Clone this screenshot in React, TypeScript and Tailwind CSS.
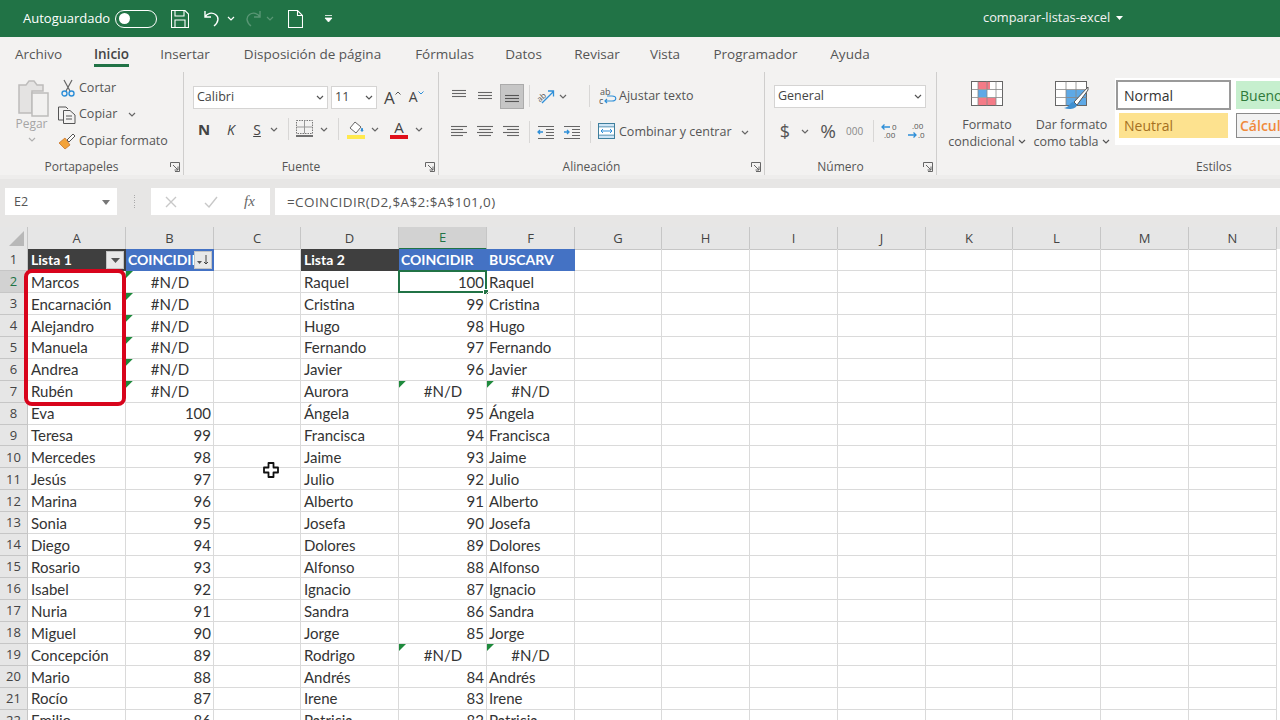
import { ReactNode } from "react";

const names1 = ["Marcos","Encarnación","Alejandro","Manuela","Andrea","Rubén","Eva","Teresa","Mercedes","Jesús","Marina","Sonia","Diego","Rosario","Isabel","Nuria","Miguel","Concepción","Mario","Rocío","Emilio"];
const match1 = ["#N/D","#N/D","#N/D","#N/D","#N/D","#N/D","100","99","98","97","96","95","94","93","92","91","90","89","88","87","86"];
const names2 = ["Raquel","Cristina","Hugo","Fernando","Javier","Aurora","Ángela","Francisca","Jaime","Julio","Alberto","Josefa","Dolores","Alfonso","Ignacio","Sandra","Jorge","Rodrigo","Andrés","Irene","Patricia"];
const match2 = ["100","99","98","97","96","#N/D","95","94","93","92","91","90","89","88","87","86","85","#N/D","84","83","82"];
const columns = ["A","B","C","D","E","F","G","H","I","J","K","L","M","N"];
const gridCols = "grid grid-cols-[28px_98px_88px_87px_98px_88px_88px_87px_88px_88px_88px_87px_88px_88px_88px_3px]";

function Chevron({ className = "" }: { className?: string }) {
  return (
    <svg width="8" height="5" viewBox="0 0 8 5" className={className}>
      <path d="M1 1l3 3 3-3" fill="none" stroke="currentColor" strokeWidth="1.2" />
    </svg>
  );
}

function AlignIcon({ lines, active }: { lines: [number, number][]; active?: boolean }) {
  return (
    <svg width="18" height="16" viewBox="0 0 18 16" className={active ? "text-[#555]" : "text-[#666]"}>
      {lines.map(([x, y], i) => (
        <path key={i} d={`M${x} ${y + 0.5}H${18 - x - (i % 2 && x === 1 ? 4 : 0)}`} stroke="currentColor" strokeWidth="1.1" />
      ))}
    </svg>
  );
}

function Group({ label, width, launcher, children }: { label: string; width: string; launcher?: boolean; children: ReactNode }) {
  return (
    <div className={`${width} shrink-0 flex flex-col h-full pt-[3px] border-r border-[#cfcecd]`}>
      <div className="h-[84px] shrink-0">{children}</div>
      <div className="flex items-center h-[16px] text-[12px] text-[#555]">
        <span className="flex-1 text-center">{label}</span>
        <span className="w-[20px] flex justify-end pr-[3px]">
          {launcher && (
            <svg width="10" height="10" viewBox="0 0 10 10" className="text-[#666]">
              <path d="M.5 5V.5H9.5V9.5H5M3 3l5 5M8 4.5V8H4.5" fill="none" stroke="currentColor" strokeWidth="1" />
            </svg>
          )}
        </span>
      </div>
    </div>
  );
}

function Sep({ className = "" }: { className?: string }) {
  return <span className={`w-px h-[22px] bg-[#d8d7d6] ${className}`} />;
}

function Combo({ text, width, className = "" }: { text: string; width: string; className?: string }) {
  return (
    <div className={`${width} h-[23px] bg-white border border-[#d5d4d3] flex items-center justify-between pl-[3px] pr-[3px] text-[12.5px] text-[#444] ${className}`}>
      {text}
      <Chevron className="text-[#555]" />
    </div>
  );
}

function TitleBar() {
  return (
    <div className="h-[37px] bg-[#217346] flex items-center text-white shrink-0 text-[13px]">
      <span className="ml-[23px] w-[84px]">Autoguardado</span>
      <span className="ml-[8px] w-[42px] h-[18px] rounded-full border border-white flex items-center pl-[3px]">
        <span className="w-[11px] h-[11px] rounded-full bg-white" />
      </span>
      <svg width="18" height="18" viewBox="0 0 18 18" className="ml-[14px]">
        <path d="M.5.5H14L17.5 4V17.5H.5ZM4 .5V6H13V.5M4 17.5V10H14V17.5" fill="none" stroke="#fff" strokeWidth="1.1" />
      </svg>
      <svg width="18" height="18" viewBox="0 0 18 18" className="ml-[14px]">
        <path d="M2 1V7H8M2 7C4 3 9 2 12.5 4.5S16 12 11 16" fill="none" stroke="#fff" strokeWidth="1.4" />
      </svg>
      <Chevron className="ml-[6px] text-white" />
      <svg width="18" height="18" viewBox="0 0 18 18" className="ml-[9px] opacity-25">
        <path d="M16 1V7H10M16 7C14 3 9 2 5.500 4.500S2 12 7 16" fill="none" stroke="#fff" strokeWidth="1.4" />
      </svg>
      <Chevron className="ml-[4px] text-white opacity-25" />
      <svg width="15" height="18" viewBox="0 0 15 18" className="ml-[14px]">
        <path d="M.5.5H9.500L14.500 5.500V17.500H.5ZM9.500.5V5.500H14.500" fill="none" stroke="#fff" strokeWidth="1.1" />
      </svg>
      <svg width="9" height="8" viewBox="0 0 9 8" className="ml-[21px]">
        <path d="M1 .5H8M1 3L4.500 7 8 3Z" fill="#fff" stroke="#fff" strokeWidth=".8" />
      </svg>
      <span className="ml-[650px] mb-[2px] w-[142px] flex items-center whitespace-nowrap text-[#f2f2f2] text-[12.8px]">
        comparar-listas-excel
        <svg width="7" height="4" viewBox="0 0 7 4" className="ml-[6px]"><path d="M0 0H7L3.500 4Z" fill="#fff" /></svg>
      </span>
    </div>
  );
}

const tabs: [string, string][] = [
  ["Archivo", "w-[47px]"],
  ["Inicio", "w-[35px]"],
  ["Insertar", "w-[48px]"],
  ["Disposición de página", "w-[143px]"],
  ["Fórmulas", "w-[57px]"],
  ["Datos", "w-[37px]"],
  ["Revisar", "w-[46px]"],
  ["Vista", "w-[32px] -ml-[3px]"],
  ["Programador", "w-[85px]"],
  ["Ayuda", "w-[40px]"],
];

function Tabs() {
  return (
    <div className="h-[35px] shrink-0 flex gap-[32px] pl-[15px] text-[13.500px] text-[#555]">
      {tabs.map(([t, w]) => (
        <div key={t} className={`${w} h-[30px] pt-[7px] flex justify-center whitespace-nowrap ${t === "Inicio" ? "border-b-[3px] border-[#217346] font-semibold text-[#444]" : ""}`}>
          {t}
        </div>
      ))}
    </div>
  );
}

function Clipboard() {
  return (
    <Group label="Portapapeles" width="w-[184px]" launcher>
      <div className="flex h-full text-[12.500px] text-[#555]">
        <div className="w-[58px] pl-[5px] pt-[4px] flex flex-col items-center text-[#a5a5a5]">
          <svg width="32" height="38" viewBox="0 0 32 38" className="ml-[3px]">
            <path d="M2 6H9L12 2H17L20 6H26V12H15V34H2Z" fill="#e4e3e2" stroke="#bdbcbb" strokeWidth="1.500" />
            <rect x="15" y="14" width="16" height="23" fill="#f2f1f0" stroke="#bdbcbb" strokeWidth="1.500" />
          </svg>
          <span className="-mt-[2px] text-[12px]">Pegar</span>
          <Chevron className="mt-[4px] text-[#b0b0b0]" />
        </div>
        <div className="flex flex-col">
          <div className="h-[26.500px] flex items-center">
            <svg width="14" height="18" viewBox="0 0 14 18" className="ml-[3px] mr-[4px]">
              <path d="M3 1L9 12M11 1L5 12" stroke="#666" strokeWidth="1.200" />
              <circle cx="3.500" cy="14.500" r="2.500" fill="none" stroke="#2e8fd8" strokeWidth="1.400" />
              <circle cx="10.500" cy="14.500" r="2.500" fill="none" stroke="#2e8fd8" strokeWidth="1.400" />
            </svg>
            Cortar
          </div>
          <div className="h-[26.500px] flex items-center">
            <svg width="18" height="18" viewBox="0 0 18 18" className="mr-[3px]">
              <path d="M5 14H.5V1H8L10 3" fill="none" stroke="#555" strokeWidth="1" />
              <path d="M5.500 4.500H12L17 9V17.500H5.500ZM8 10H14M8 13H14" fill="none" stroke="#555" strokeWidth="1" />
            </svg>
            Copiar
            <Chevron className="ml-[11px] text-[#666]" />
          </div>
          <div className="h-[26.500px] flex items-center">
            <svg width="18" height="18" viewBox="0 0 18 18" className="mr-[3px]">
              <path d="M1 11L7 6L12 13L7 17C5 15 3 13 1 11Z" fill="#f2a33a" stroke="#c9752a" strokeWidth=".8" />
              <path d="M9 8L15 2L17 4L11 10Z" fill="#fff" stroke="#555" strokeWidth="1" />
            </svg>
            Copiar formato
          </div>
        </div>
      </div>
    </Group>
  );
}

function Font() {
  return (
    <Group label="Fuente" width="w-[255px]" launcher>
      <div className="flex flex-col h-full pl-[9px] pt-[10px] text-[#444]">
        <div className="flex items-center h-[24px]">
          <Combo text="Calibri" width="w-[135px]" />
          <Combo text="11" width="w-[46px]" className="ml-[3px]" />
          <span className="ml-[7px] text-[17px] leading-none">A</span>
          <svg width="6" height="4" viewBox="0 0 6 4" className="mb-[8px]"><path d="M.5 3.500L3 1 5.500 3.500" fill="none" stroke="#555" /></svg>
          <span className="ml-[8px] text-[14px] leading-none">A</span>
          <svg width="6" height="4" viewBox="0 0 6 4" className="mb-[8px]"><path d="M.5.500L3 3 5.500.500" fill="none" stroke="#2e8fd8" /></svg>
        </div>
        <div className="flex items-center h-[24px] mt-[8px]">
          <span className="ml-[4px] w-[14px] text-center font-bold text-[15px]">N</span>
          <span className="ml-[13px] w-[14px] text-center italic text-[14px]">K</span>
          <span className="ml-[12px] w-[14px] text-center underline text-[14px]">S</span>
          <Chevron className="ml-[6px] text-[#666]" />
          <Sep className="ml-[10px]" />
          <svg width="18" height="18" viewBox="0 0 18 18" className="ml-[7px]">
            <path d="M.5.500H16.500V13.500H.5Z" fill="none" stroke="#777" strokeDasharray="1.500 1" />
            <path d="M8.500.500V13.500M.5 7H16.500" stroke="#999" />
            <path d="M0 16H17" stroke="#444" strokeWidth="1.500" />
          </svg>
          <Chevron className="ml-[6px] text-[#666]" />
          <Sep className="ml-[10px]" />
          <svg width="18" height="20" viewBox="0 0 18 20" className="ml-[8px]">
            <path d="M3 9L8 3L14 8L9 14Z" fill="#fff" stroke="#666" />
            <path d="M15 9l1 3-2 0Z" fill="#2e8fd8" stroke="#2e8fd8" />
            <rect y="16" width="18" height="4" fill="#ffe94d" />
          </svg>
          <Chevron className="ml-[6px] text-[#666]" />
          <span className="ml-[11px] w-[18px] flex flex-col items-center">
            <span className="text-[15px] leading-[16px]">A</span>
            <span className="w-[18px] h-[4px] bg-[#e00f1a]" />
          </span>
          <Chevron className="ml-[7px] text-[#666]" />
        </div>
      </div>
    </Group>
  );
}

const top = ([[2, 2], [2, 5], [2, 8]] as [number, number][]);
const mid = ([[2, 4], [2, 7], [2, 10]] as [number, number][]);
const bottom = ([[2, 7], [2, 10], [2, 13]] as [number, number][]);
const left = ([[1, 2], [1, 5], [1, 8], [1, 11]] as [number, number][]);
const center = ([[1, 2], [3, 5], [1, 8], [3, 11]] as [number, number][]);

function IndentIcon({ flip }: { flip?: boolean }) {
  return (
    <svg width="18" height="16" viewBox="0 0 18 16">
      <path d={flip ? "M1 8H6M4 6l2 2-2 2" : "M6 8H1M3 6L1 8l2 2"} fill="none" stroke="#2e8fd8" strokeWidth="1.300" />
      <path d="M1 2.500H17M9 5.500H17M9 8.500H17M9 11.500H17M1 14.500H17" stroke="#666" strokeWidth="1" />
    </svg>
  );
}

function Alignment() {
  return (
    <Group label="Alineación" width="w-[326px]" launcher>
      <div className="flex flex-col h-full pt-[8px] text-[12.500px] text-[#555]">
        <div className="flex items-center h-[26px]">
          <span className="ml-[11px] w-[18px]"><AlignIcon lines={top} /></span>
          <span className="ml-[8px] w-[18px]"><AlignIcon lines={mid} /></span>
          <span className="ml-[6px] w-[24px] h-[25px] bg-[#c6c6c6] border border-[#ababab] flex items-center justify-center"><AlignIcon lines={bottom} active /></span>
          <Sep className="ml-[5px]" />
          <svg width="18" height="18" viewBox="0 0 18 18" className="ml-[7px]">
            <text x="0" y="12" fontSize="8" fill="#555" transform="rotate(-40 6 10)" fontFamily="Open Sans, sans-serif">ab</text>
            <path d="M5 16L16 5M11 4H16.500V9.500" fill="none" stroke="#2e8fd8" strokeWidth="1.300" />
          </svg>
          <Chevron className="ml-[4px] text-[#666]" />
          <Sep className="ml-[22px]" />
          <span className="ml-[9px] w-[20px] flex items-center text-[#555]">
            <svg width="18" height="18" viewBox="0 0 18 18">
              <text x="1" y="8" fontSize="9" fill="#555" fontFamily="Open Sans, sans-serif">ab</text>
              <text x="0" y="17" fontSize="9" fill="#555" fontFamily="Open Sans, sans-serif">c</text>
              <path d="M6 14H13C18 14 18 9 13 9H8M8 12L6 14 8 16" fill="none" stroke="#2e8fd8" strokeWidth="1.200" />
            </svg>
          </span>
          <span className="whitespace-nowrap pt-[1px]">Ajustar texto</span>
        </div>
        <div className="flex items-center h-[24px] mt-[11px]">
          <span className="ml-[11px] w-[18px]"><AlignIcon lines={left} /></span>
          <span className="ml-[8px] w-[18px]"><AlignIcon lines={center} /></span>
          <span className="ml-[8px] w-[18px] -scale-x-100"><AlignIcon lines={left} /></span>
          <Sep className="ml-[9px]" />
          <span className="ml-[7px] w-[18px]"><IndentIcon /></span>
          <span className="ml-[8px] w-[18px]"><IndentIcon flip /></span>
          <Sep className="ml-[9px]" />
          <svg width="18" height="18" viewBox="0 0 18 18" className="ml-[7px] mr-[3px]">
            <rect x=".5" y=".5" width="16" height="15" fill="#cfe6f7" stroke="#3f7f9d" />
            <path d="M.5 4H16.500M.5 12H16.500" stroke="#3f7f9d" />
            <rect x="1" y="4.500" width="15" height="7" fill="#fff" />
            <path d="M3 8H14M5 6L3 8l2 2M12 6l2 2-2 2" fill="none" stroke="#2e8fd8" />
          </svg>
          <span className="whitespace-nowrap w-[114px]">Combinar y centrar</span>
          <Chevron className="ml-[8px] text-[#666]" />
        </div>
      </div>
    </Group>
  );
}

function NumberGroup() {
  return (
    <Group label="Número" width="w-[172px]" launcher>
      <div className="flex flex-col h-full pl-[9px] pt-[10px] text-[#555]">
        <Combo text="General" width="w-[152px]" />
        <div className="flex items-center h-[26px] mt-[10px]">
          <span className="ml-[5px] w-[12px] text-center text-[18px] leading-none">$</span>
          <Chevron className="ml-[10px] text-[#666]" />
          <span className="ml-[8px] w-[22px] text-center text-[19px] leading-none">%</span>
          <span className="ml-[7px] w-[20px] text-[10px] text-[#888] leading-none">000</span>
          <Sep className="ml-[7px]" />
          <svg width="20" height="18" viewBox="0 0 20 18" className="ml-[7px]">
            <path d="M9 5H1M3.500 2.500L1 5l2.500 2.500" fill="none" stroke="#2e8fd8" strokeWidth="1.300" />
            <text x="11" y="8" fontSize="8" fill="#555" fontFamily="Open Sans, sans-serif">0</text>
            <text x="3" y="16" fontSize="8" fill="#555" fontFamily="Open Sans, sans-serif">.00</text>
          </svg>
          <svg width="20" height="18" viewBox="0 0 20 18" className="ml-[6px]">
            <text x="5" y="7" fontSize="8" fill="#555" fontFamily="Open Sans, sans-serif">.00</text>
            <path d="M1 13H9M6.500 10.500L9 13l-2.500 2.500" fill="none" stroke="#2e8fd8" strokeWidth="1.300" />
            <text x="11" y="16" fontSize="8" fill="#555" fontFamily="Open Sans, sans-serif">.0</text>
          </svg>
        </div>
      </div>
    </Group>
  );
}

function Styles() {
  return (
    <div className="flex-1 flex flex-col h-full">
      <div className="h-[87px] shrink-0 flex text-[12.500px] text-[#555] leading-[17px]">
        <div className="w-[100px] flex flex-col items-center pt-[9px]">
          <svg width="32" height="25" viewBox="0 0 32 25">
            <rect x=".5" y=".5" width="31" height="24" fill="#fff" stroke="#666" />
            <rect x="7" y="1" width="12" height="7" fill="#f47b87" />
            <rect x="7" y="9" width="9" height="7" fill="#5ea9e6" />
            <rect x="7" y="17" width="18" height="7" fill="#f47b87" />
            <path d="M7 .5V24.500M16 .5V24.500M25 .5V24.500M.5 8.500H31.500M.5 16.500H31.500" stroke="#888" strokeWidth=".8" fill="none" />
          </svg>
          <span className="mt-[10px]">Formato</span>
          <span className="flex items-center whitespace-nowrap">condicional<Chevron className="ml-[3px]" /></span>
        </div>
        <div className="w-[75px] -ml-[3px] flex flex-col items-center pt-[9px] whitespace-nowrap shrink-0">
          <svg width="34" height="29" viewBox="0 0 34 29" className="-mb-[4px]">
            <rect x=".5" y=".5" width="31" height="24" fill="#fff" stroke="#666" />
            <rect x="11" y="9" width="20" height="15" fill="#5ea9e6" />
            <path d="M11 .5V24.500M21 .5V24.500M.5 8.500H31.500M.5 16.500H31.500" stroke="#888" strokeWidth=".8" fill="none" />
            <path d="M33 6L19 21L22 24L33 9Z" fill="#fff" stroke="#555" />
            <path d="M18 21C14 22 15 26 9 27C14 29 21 28 22 24Z" fill="#3f8fd0" />
          </svg>
          <span className="mt-[10px]">Dar formato</span>
          <span className="flex items-center">como tabla<Chevron className="ml-[3px]" /></span>
        </div>
        <div className="ml-[6px] mt-[6px] w-[170px] h-[67px] bg-white pl-[1px] pt-[2px] grid grid-cols-[115px_1fr] gap-x-[5px] gap-y-[3px] grid-rows-[30px_25px] overflow-hidden text-[14px] whitespace-nowrap">
          <div className="border-2 border-[#9a9a9a] bg-white text-[#333] flex items-center pl-[6px]">Normal</div>
          <div className="bg-[#c6efce] text-[#2f7a3a] flex items-center pl-[4px] my-[1px]">Bueno</div>
          <div className="bg-[#fde28f] text-[#a5701f] flex items-center pl-[5px] mx-[3px]">Neutral</div>
          <div className="border border-[#8a8a8a] bg-[#f2f2f2] text-[#f08a3c] font-semibold flex items-center pl-[3px]">Cálculo</div>
        </div>
      </div>
      <div className="h-[16px] flex items-center text-[12px] text-[#555]">
        <span className="ml-[259px]">Estilos</span>
      </div>
    </div>
  );
}

function Ribbon() {
  return (
    <div className="h-[103px] shrink-0 flex bg-[#f3f2f1]">
      <Clipboard />
      <Font />
      <Alignment />
      <NumberGroup />
      <Styles />
    </div>
  );
}

function FormulaBar() {
  return (
    <div className="h-[52px] shrink-0 bg-[#e7e6e5] flex items-start pt-[9px] text-[#555] border-t-4 border-[#eeedec]">
      <div className="ml-[5px] w-[112px] h-[27px] bg-white flex items-center justify-between pl-[9px] pr-[7px] pt-[1px] text-[12.500px]">
        E2
        <svg width="8" height="5" viewBox="0 0 8 5"><path d="M0 0H8L4 5Z" fill="#777" /></svg>
      </div>
      <div className="w-[34px] h-[27px] flex items-center justify-center">
        <svg width="3" height="13" viewBox="0 0 3 13"><path d="M1.500 0V3M1.500 5V8M1.500 10V13" stroke="#aaa" strokeDasharray="1 1" /></svg>
      </div>
      <div className="w-[119px] h-[27px] bg-white flex items-center">
        <svg width="12" height="12" viewBox="0 0 12 12" className="ml-[14px]"><path d="M1 1L11 11M11 1L1 11" stroke="#c8c8c8" strokeWidth="1.400" /></svg>
        <svg width="14" height="12" viewBox="0 0 14 12" className="ml-[27px]"><path d="M1 7L5 11 13 1" fill="none" stroke="#c8c8c8" strokeWidth="1.400" /></svg>
        <span className="ml-[26px] text-[15px] italic text-[#666]" style={{ fontFamily: '"Liberation Serif", serif' }}>fx</span>
      </div>
      <div className="ml-[5px] flex-1 h-[27px] bg-white flex items-center pl-[12px] pt-[1px] text-[13.500px] tracking-[0.4px]">
        =COINCIDIR(D2,$A$2:$A$101,0)
      </div>
    </div>
  );
}

function Cell({ text, align = "left", flag, selected, tight }: { text?: string; align?: "left" | "right" | "center"; flag?: boolean; selected?: boolean; tight?: boolean }) {
  const aligned = align === "right" ? "justify-end" : align === "center" ? "justify-center" : "justify-start";
  return (
    <div className={`relative h-[21.95px] flex items-center pt-[1px] pr-[2px] whitespace-nowrap border-r border-b border-[#dadada] text-[#333] ${tight ? "pl-[2px]" : "pl-[3px]"} ${aligned}`}>
      {flag && <span className="absolute left-0 top-0 w-[7px] h-[7px] bg-[#1e8a3c] [clip-path:polygon(0_0,100%_0,0_100%)]" />}
      {text}
      {selected && (
        <>
          <span className="absolute -left-px -top-px right-[-1px] bottom-[-1px] border-2 border-[#217346]" />
          <span className="absolute right-[-3px] bottom-[-3px] w-[6px] h-[6px] bg-[#217346] border border-white" />
        </>
      )}
    </div>
  );
}

function FilterButton({ sort }: { sort?: boolean }) {
  return (
    <span className="absolute right-[2px] top-[2px] w-[18px] h-[18px] bg-[#e9e9e9] border border-[#c4c4c4] flex items-center justify-center">
      {sort ? (
        <svg width="12" height="10" viewBox="0 0 12 10"><path d="M0 6H5L2.500 9Z" fill="#555" /><path d="M9 0V9M7 7l2 2 2-2" fill="none" stroke="#444" /></svg>
      ) : (
        <svg width="9" height="5" viewBox="0 0 9 5"><path d="M0 0H9L4.500 5Z" fill="#555" /></svg>
      )}
    </span>
  );
}

function HeadCell({ text, dark, children }: { text: string; dark?: boolean; children?: ReactNode }) {
  return (
    <div className={`relative h-[21.95px] text-white font-bold text-[14px] flex items-center overflow-hidden whitespace-nowrap ${dark ? "bg-[#3f3f3f] px-[3px]" : "bg-[#4472c4] px-[2px]"}`}>
      {text}
      {children}
    </div>
  );
}

function Sheet() {
  return (
    <div className="relative flex-1 overflow-hidden bg-white text-[15px]" style={{ fontFamily: 'Lato, "Open Sans", sans-serif' }}>
      <div className={`${gridCols} h-[22px] bg-[#e6e6e6] text-[13px] text-[#444]`} style={{ fontFamily: '"Open Sans", sans-serif' }}>
        <div className="flex items-center justify-end border-r border-[#c6c6c6] pr-[3px]">
          <svg width="15" height="15" viewBox="0 0 15 15" className="mt-[1px]"><path d="M15 0V15H0Z" fill="#b8b8b8" /></svg>
        </div>
        {columns.map((c) => (
          <div key={c} className={`flex items-center justify-center pt-[1px] border-r border-[#c6c6c6] ${c === "E" ? "bg-[#d2d2d2] text-[#217346] border-b-2 border-b-[#217346]" : "border-b border-b-[#c6c6c6]"}`}>
            {c}
          </div>
        ))}
        <div />
      </div>
      <div className={gridCols}>
        <RowHead n={1} />
        <HeadCell text="Lista 1" dark><FilterButton /></HeadCell>
        <HeadCell text="COINCIDIR"><FilterButton sort /></HeadCell>
        <Cell />
        <HeadCell text="Lista 2" dark />
        <HeadCell text="COINCIDIR" />
        <HeadCell text="BUSCARV" />
        {Array.from({ length: 8 }, (_, i) => <Cell key={i} />)}
        <div />
        {names1.map((name, i) => {
          const naB = match1[i] === "#N/D";
          const naE = match2[i] === "#N/D";
          return (
            <Row key={name} n={i + 2}>
              <Cell text={name} />
              <Cell text={match1[i]} align={naB ? "center" : "right"} flag={naB} />
              <Cell />
              <Cell text={names2[i]} />
              <Cell text={match2[i]} align={naE ? "center" : "right"} flag={naE} selected={i === 0} />
              <Cell text={naE ? "#N/D" : names2[i]} align={naE ? "center" : "left"} flag={naE} tight />
              {Array.from({ length: 8 }, (_, j) => <Cell key={j} />)}
              <div />
            </Row>
          );
        })}
      </div>
      <span className="absolute left-[24px] top-[42px] w-[102px] h-[137px] border-4 border-[#d8041c] rounded-[8px]" />
      <svg width="16" height="16" viewBox="0 0 16 16" className="absolute left-[263px] top-[235px]">
        <path d="M5.500 1H10.500V5.500H15V10.500H10.500V15H5.500V10.500H1V5.500H5.500Z" fill="#fff" stroke="#111" strokeWidth="1.800" strokeLinejoin="round" />
      </svg>
    </div>
  );
}

function RowHead({ n }: { n: number }) {
  return (
    <div className={`h-[21.95px] pt-[1px] flex items-center justify-center text-[13px] border-r border-b border-[#c6c6c6] ${n === 2 ? "bg-[#d2d2d2] text-[#217346]" : "bg-[#e6e6e6] text-[#444]"}`} style={{ fontFamily: '"Open Sans", sans-serif' }}>
      {n}
    </div>
  );
}

function Row({ n, children }: { n: number; children: ReactNode }) {
  return (
    <>
      <RowHead n={n} />
      {children}
    </>
  );
}

export default function App() {
  return (
    <div className="w-[1280px] h-[720px] overflow-hidden flex flex-col bg-white" style={{ fontFamily: '"Open Sans", sans-serif' }}>
      <TitleBar />
      <div className="bg-[#f3f2f1]">
        <Tabs />
        <Ribbon />
      </div>
      <FormulaBar />
      <Sheet />
    </div>
  );
}
